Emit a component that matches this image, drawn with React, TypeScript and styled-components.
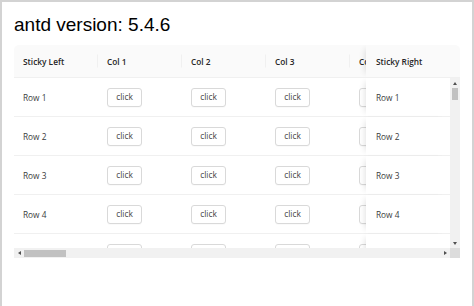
import styled, { createGlobalStyle } from "styled-components";

const GlobalStyle = createGlobalStyle`
  html, body {
    margin: 0;
    padding: 0;
    background: #fff;
  }
  body {
    width: 474px;
    height: 306px;
    overflow: hidden;
  }
`;

const Frame = styled.div`
  box-sizing: border-box;
  width: 474px;
  height: 306px;
  border-top: 2px solid #d3d3d3;
  border-left: 2px solid #d3d3d3;
  border-right: 2px solid #d3d3d3;
  padding: 12px 12px 0;
  background: #fff;
`;

const Title = styled.h1`
  margin: 0 0 10px;
  font-family: "Liberation Sans", Arial, sans-serif;
  font-size: 19px;
  font-weight: 400;
  line-height: 21px;
  color: #000;
`;

const Table = styled.div`
  width: 446px;
  font-family: "Open Sans", "Noto Sans", sans-serif;
  font-size: 8.3px;
  color: #333;
`;

const HeaderRow = styled.div`
  display: grid;
  grid-template-columns: 1fr 84px 10px;
  height: 33px;
  box-sizing: border-box;
  background: #fafafa;
  border-bottom: 1px solid #f0f0f0;
  border-radius: 5px 5px 0 0;
  overflow: hidden;
`;

const Scroller = styled.div`
  display: flex;
  overflow: hidden;
  min-width: 0;
`;

const Cell = styled.div<{ $head?: boolean; $divider?: boolean }>`
  flex: 0 0 84px;
  box-sizing: border-box;
  padding-left: 9px;
  display: flex;
  align-items: center;
  position: relative;
  white-space: nowrap;
  font-weight: ${(p) => (p.$head ? 600 : 400)};
  color: ${(p) => (p.$head ? "#262626" : "#3a3a3a")};

  ${(p) =>
    p.$divider &&
    `
    &::before {
      content: "";
      position: absolute;
      right: 0;
      top: 50%;
      width: 1px;
      height: 13px;
      transform: translateY(-50%);
      background: #f0f0f0;
    }
  `}
`;

const FixedRight = styled(Cell)`
  padding-left: 10px;
  background: ${(p) => (p.$head ? "#fafafa" : "#fff")};
  box-shadow: -5px 0 6px -4px rgba(5, 5, 5, 0.12);
  z-index: 1;
`;

const Body = styled.div`
  display: grid;
  grid-template-columns: 1fr 10px;
  grid-template-rows: 170px 10px;
`;

const Rows = styled.div`
  display: flex;
  flex-direction: column;
  overflow: hidden;
`;

const Row = styled.div`
  display: grid;
  grid-template-columns: 1fr 84px;
  flex: 0 0 39px;
  box-sizing: border-box;
  border-bottom: 1px solid #f0f0f0;
`;

const Button = styled.button`
  box-sizing: border-box;
  width: 35px;
  height: 19px;
  padding: 0;
  border: 1px solid #d9d9d9;
  border-radius: 3px;
  background: #fff;
  box-shadow: 0 1px 0 rgba(0, 0, 0, 0.02);
  font-family: inherit;
  font-size: 8.4px;
  color: #444;
  line-height: 1;
  cursor: pointer;
`;

const Bar = styled.div<{ $vertical?: boolean }>`
  display: flex;
  flex-direction: ${(p) => (p.$vertical ? "column" : "row")};
  align-items: ${(p) => (p.$vertical ? "stretch" : "center")};
  background: #f1f1f1;
`;

const ArrowBox = styled.div`
  flex: 0 0 10px;
  height: 10px;
  display: flex;
  align-items: center;
  justify-content: center;
`;

const Arrow = styled.span<{ $dir: "up" | "down" | "left" | "right" }>`
  width: 0;
  height: 0;
  border: 2.5px solid transparent;
  ${(p) =>
    p.$dir === "up"
      ? "border-bottom: 3px solid #505050; border-top-width: 0;"
      : p.$dir === "down"
      ? "border-top: 3px solid #505050; border-bottom-width: 0;"
      : p.$dir === "left"
      ? "border-right: 3px solid #505050; border-left-width: 0;"
      : "border-left: 3px solid #505050; border-right-width: 0;"}
`;

const Thumb = styled.div<{ $vertical?: boolean }>`
  background: #c1c1c1;
  ${(p) =>
    p.$vertical
      ? "height: 12px; margin: 0 2px;"
      : "width: 42px; height: 7px; margin: 0;"}
`;

const Spacer = styled.div`
  flex: 1;
`;

const Corner = styled.div`
  background: #dcdcdc;
`;

const columns = ["Col 1", "Col 2", "Col 3", "Col 4"];
const rows = ["Row 1", "Row 2", "Row 3", "Row 4", "Row 5"];

export default function App() {
  return (
    <>
      <GlobalStyle />
      <Frame>
        <Title>antd version: 5.4.6</Title>
        <Table>
          <HeaderRow>
            <Scroller>
              <Cell $head $divider>
                Sticky Left
              </Cell>
              {columns.map((c) => (
                <Cell key={c} $head $divider>
                  {c}
                </Cell>
              ))}
            </Scroller>
            <FixedRight $head>Sticky Right</FixedRight>
            <div />
          </HeaderRow>
          <Body>
            <Rows>
              {rows.map((r) => (
                <Row key={r}>
                  <Scroller>
                    <Cell>{r}</Cell>
                    {columns.map((c) => (
                      <Cell key={c}>
                        <Button>click</Button>
                      </Cell>
                    ))}
                  </Scroller>
                  <FixedRight>{r}</FixedRight>
                </Row>
              ))}
            </Rows>
            <Bar $vertical>
              <ArrowBox>
                <Arrow $dir="up" />
              </ArrowBox>
              <Thumb $vertical />
              <Spacer />
              <ArrowBox>
                <Arrow $dir="down" />
              </ArrowBox>
            </Bar>
            <Bar>
              <ArrowBox>
                <Arrow $dir="left" />
              </ArrowBox>
              <Thumb />
              <Spacer />
              <ArrowBox>
                <Arrow $dir="right" />
              </ArrowBox>
            </Bar>
            <Corner />
          </Body>
        </Table>
      </Frame>
    </>
  );
}
